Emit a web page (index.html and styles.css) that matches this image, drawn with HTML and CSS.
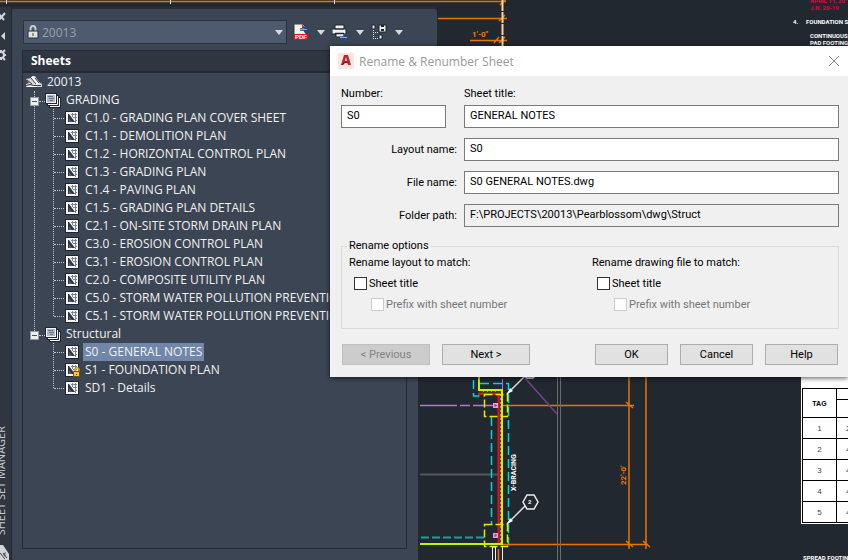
FILE: index.html
```html
<!DOCTYPE html>
<html lang="en">
<head>
<meta charset="utf-8">
<title>Sheet Set Manager</title>
<link rel="stylesheet" href="styles.css">
</head>
<body>
<svg width="0" height="0" class="defs" aria-hidden="true">
  <defs>
    <symbol id="sheet" viewBox="0 0 14 14">
      <path fill="#1f252c" d="M0 0h14v14H0z"/><path fill="#f5f5f5" d="M1 1h12v12H1z"/>
      <path fill="#303845" d="M3 3l1 0 6 8H3z"/>
      <path d="M6 3.500h6M7.500 2v4M10.500 2v10M8 6.500h4M10 9.500h2" stroke="#7b838f" fill="none"/>
      <path d="M4 7v4h3z" fill="#59616d"/>
    </symbol>
    <symbol id="subset" viewBox="0 0 16 15">
      <path fill="#1f252c" d="M0 0h12v2h2v2h2v11H4v-2H2v-2H0z"/>
      <path d="M5 13.500h9.500V5M3 11.500h9.500V3" stroke="#fff" fill="none"/>
      <path fill="#f2f4f7" d="M1 1h10v9H1z"/><path fill="#aeb7c5" d="M2 2h8v7H2z"/>
      <path d="M3 3.500h5M4 5.500h5M5 7.500h3" stroke="#667287"/>
    </symbol>
    <symbol id="sheetset" viewBox="0 0 16 12">
      <path fill="#d5d7da" d="M0 3l5-1 1-2h3l4 6 3 2v3H0V8l3-1z"/>
      <path fill="#fff" d="M5 1h3l5 7-3 1zM1 10h10v1H1z"/>
      <path d="M1 4l5 4M5 2l5 6M9 2l4 5M0 9.500l4-1 4 1h7" stroke="#39414d" fill="none"/>
    </symbol>
  </defs>
</svg>

<main class="desktop">
  <svg class="drawing" width="848" height="560" viewBox="0 0 848 560" aria-hidden="true">
    <g class="dim">
      <path d="M0 1.500h506M438 18.500h69M470 40.500h37M500 5l6-6M499 21l6-6M499 43l6-6M494 43l5-6"/>
      <path d="M502 405.500h132M502 544.500h146M629 377v172M646 377v172M626 402l7 6M626 541l7 6M643 541l7 6"/>
      <path d="M498.500 549v11"/>
    </g>
    <path d="M502.500 0v46" stroke="#ffd0a8" stroke-width="2" stroke-dasharray="11 1"/>
    <path d="M6.500 0v4M170.500 0v4M334.500 0v4" stroke="#ddd"/>
    <path d="M557.500 377v183M560.500 377v183" stroke="#6a6c70"/>
    <path d="M420 474.500h79" stroke="#56565a" stroke-width="2"/>
    <path d="M524 377l33 37" stroke="#70438c" stroke-width="1.500"/>
    <path d="M420 405.500h78" stroke="#a877e8" stroke-width="1.500" stroke-dasharray="37 3 10 3"/>
    <path d="M502.500 379v13" stroke="#a877e8"/>
    <path d="M473.500 380v16h11M480 383.500h28.500V544M491.500 417v107" stroke="#00d5d8" fill="none" stroke-width="1.500" stroke-dasharray="9 4"/>
    <path d="M421 537.500h64" stroke="#10a4a7" stroke-width="2" stroke-dasharray="8 3"/>
    <path d="M479 391h22v4h-22zM498 394h4v150h-4z" fill="#49313b"/>
    <path d="M480 395l4-4m0 4l4-4m0 4l4-4m0 4l4-4M500.500 394v150" stroke="#a98b88" stroke-dasharray="2 2"/>
    <path d="M478 394h20.500V544" stroke="#e0101e" fill="none" stroke-width="2"/>
    <path d="M479 377v13h23v154H420" stroke="#c9f000" fill="none" stroke-width="2"/>
    <path d="M484.500 394.500h23v22h-23zM484.500 524.500h23v22h-23z" stroke="#e8e800" fill="none" stroke-width="1.500" stroke-dasharray="8 3"/>
    <path d="M493 403h5v5h-5zM493 533h5v5h-5z" fill="#f29adf"/>
    <path d="M495 404v3m0-1.500h2M495 534v3m0-2h2" stroke="#863b7a"/>
    <path d="M492.500 560v-13h3v13M502.500 546v14" stroke="#eee" fill="none"/>
    <path d="M507 394l18-18M507 524l18-18" stroke="#ddd" stroke-width="1.500"/>
    <path d="M507 394l3-6 3 3zM507 524l3-6 3 3z" fill="#fff"/>
    <path d="M523 502l4-7h7l4 7-4 7h-7zM524 376l3 2h6l2-2" stroke="#eee" fill="none" stroke-width="1.500"/>
    <text x="528" y="504" class="cad">2</text>
    <text x="472" y="37" class="cad cad-dim">1'-0"</text>
    <text transform="translate(626 485) rotate(-90)" class="cad cad-dim">22'-0'</text>
    <text transform="translate(516 491) rotate(-90)" class="cad cad-note">X-BRACING</text>
    <text x="810" y="3" class="cad cad-red">APRIL 11, 20</text>
    <text x="810" y="10" class="cad cad-red">J.N. 20-19</text>
    <text x="793" y="24" class="cad">4.</text>
    <text x="806" y="24" class="cad">FOUNDATION SO</text>
    <text x="810" y="38" class="cad">CONTINUOUS F</text>
    <text x="810" y="45" class="cad">PAD FOOTINGS</text>
    <text x="803" y="560" class="cad">SPREAD FOOTIN</text>
  </svg>

  <div class="schedule">
    <table>
      <tbody>
        <tr><th rowspan="2">TAG</th><td class="half"></td></tr>
        <tr><td class="half low"></td></tr>
        <tr><td>1</td><td>2</td></tr>
        <tr><td>2</td><td>4</td></tr>
        <tr><td>3</td><td>4</td></tr>
        <tr><td>4</td><td>4</td></tr>
        <tr><td>5</td><td>4</td></tr>
      </tbody>
    </table>
  </div>

  <aside class="palette">
    <div class="rail">
      <svg width="8" height="55" viewBox="0 0 8 55" aria-hidden="true">
        <path d="M-2 6l6 7M5 6l-6 7" stroke="#d4d6d9" stroke-width="2"/>
        <path d="M5 25v8l-4-4z" fill="#d4d6d9"/>
        <circle cx="1" cy="48" r="3" fill="none" stroke="#d4d6d9" stroke-width="2"/>
        <path d="M1 43v2M1 51v2M4 48h2M3 45l2-2M3 51l2 2" stroke="#d4d6d9" stroke-width="2"/>
      </svg>
      <div class="rail-foot">
        <span class="rail-title">SHEET SET MANAGER</span>
        <svg width="10" height="15" viewBox="0 0 10 15" aria-hidden="true">
          <path d="M0 0h3l6 9v6H0z" fill="#d2d4d6"/><path d="M0 8l5 6M3 8l4 5M6 8c-3 0-3 3 0 3" stroke="#3b424d" fill="none"/>
        </svg>
      </div>
    </div>
    <div class="palette-body">
      <div class="toolbar">
        <button class="combo" type="button">
          <svg width="12" height="14" viewBox="0 0 12 14"><path d="M3.500 7V4c0-4 5-4 5 0v3" stroke="#c7cbd1" stroke-width="2" fill="none"/><path d="M1 6h10v7H1z" fill="#e1e3e5" stroke="#282e37"/><path d="M6 8v3" stroke="#3c4452"/></svg>
          <span>20013</span><i class="caret"></i>
        </button>
        <button class="tool" type="button" aria-label="Publish to PDF">
          <svg width="17" height="17" viewBox="0 0 17 17"><path d="M1 0h9l3 3v8H1z" fill="#f3f3f3" stroke="#323946"/><path d="M9 0l4 4h-4z" fill="#d52222"/><path d="M7 5.500h7M11.500 2.500l3 3-3 3" stroke="#214a86" stroke-width="2.500" fill="none"/><path d="M7 5.500h7" stroke="#6fa5e4"/><path d="M1 10h14v6H1z" fill="#d21818"/><text x="2" y="15" class="pdf">PDF</text></svg>
          <i class="caret"></i>
        </button>
        <button class="tool" type="button" aria-label="Publish">
          <svg width="17" height="17" viewBox="0 0 17 17"><path d="M3 5V1h9v4h2v5h-2v3H4v-3H0V5z" fill="#f0f0f0" stroke="#1e242b"/><path d="M3 5h9M3 9.500h9" stroke="#1e242b" stroke-width="1.500"/><path d="M8 13.500h7M12 10.500l3 3-3 3" stroke="#254f8e" stroke-width="2" fill="none"/><path d="M8 13.500h7" stroke="#83b1ec"/></svg>
          <i class="caret"></i>
        </button>
        <button class="tool" type="button" aria-label="Sheet selections">
          <svg width="17" height="17" viewBox="0 0 17 17"><path d="M2.500 6v10M4 8.500h3M4 14.500h3" stroke="#dadde1" stroke-dasharray="1 1"/><path d="M1 1h3v4H1zM8 11h3v4H8z" fill="#eee" stroke="#1e242b"/><path d="M8 1h7v7H8z" fill="#eee" stroke="#1e242b"/><path d="M10 1h3v2h-3zM10 5h3v2h-3z" fill="#1e242b"/></svg>
          <i class="caret"></i>
        </button>
      </div>
      <section class="panel">
        <h2>Sheets</h2>
        <ul class="tree">
          <li><div class="row root"><svg class="ic-set"><use href="#sheetset"/></svg><span>20013</span></div>
            <ul class="groups">
              <li>
                <div class="row"><button class="toggle" type="button" aria-label="Collapse"></button><svg class="ic-sub"><use href="#subset"/></svg><span>GRADING</span></div>
                <ul class="sheets">
                  <li class="row"><svg class="ic"><use href="#sheet"/></svg><span>C1.0 - GRADING PLAN COVER SHEET</span></li>
                  <li class="row"><svg class="ic"><use href="#sheet"/></svg><span>C1.1 - DEMOLITION PLAN</span></li>
                  <li class="row"><svg class="ic"><use href="#sheet"/></svg><span>C1.2 - HORIZONTAL CONTROL PLAN</span></li>
                  <li class="row"><svg class="ic"><use href="#sheet"/></svg><span>C1.3 - GRADING PLAN</span></li>
                  <li class="row"><svg class="ic"><use href="#sheet"/></svg><span>C1.4 - PAVING PLAN</span></li>
                  <li class="row"><svg class="ic"><use href="#sheet"/></svg><span>C1.5 - GRADING PLAN DETAILS</span></li>
                  <li class="row"><svg class="ic"><use href="#sheet"/></svg><span>C2.1 - ON-SITE STORM DRAIN PLAN</span></li>
                  <li class="row"><svg class="ic"><use href="#sheet"/></svg><span>C3.0 - EROSION CONTROL PLAN</span></li>
                  <li class="row"><svg class="ic"><use href="#sheet"/></svg><span>C3.1 - EROSION CONTROL PLAN</span></li>
                  <li class="row"><svg class="ic"><use href="#sheet"/></svg><span>C2.0 - COMPOSITE UTILITY PLAN</span></li>
                  <li class="row"><svg class="ic"><use href="#sheet"/></svg><span>C5.0 - STORM WATER POLLUTION PREVENTION</span></li>
                  <li class="row"><svg class="ic"><use href="#sheet"/></svg><span>C5.1 - STORM WATER POLLUTION PREVENTION</span></li>
                </ul>
              </li>
              <li>
                <div class="row"><button class="toggle" type="button" aria-label="Collapse"></button><svg class="ic-sub"><use href="#subset"/></svg><span>Structural</span></div>
                <ul class="sheets">
                  <li class="row"><svg class="ic"><use href="#sheet"/></svg><span class="selected">S0 - GENERAL NOTES</span></li>
                  <li class="row"><svg class="ic"><use href="#sheet"/><path d="M10 10V7c0-3 4-3 4 0v3" stroke="#d99b22" fill="none" stroke-width="1.500"/><path d="M8.500 8.500h6v5h-6z" fill="#ffc928" stroke="#7b4b00"/><path d="M11 11h1v1h-1z" fill="#402400"/></svg><span>S1 - FOUNDATION PLAN</span></li>
                  <li class="row"><svg class="ic"><use href="#sheet"/></svg><span>SD1 - Details</span></li>
                </ul>
              </li>
            </ul>
          </li>
        </ul>
      </section>
    </div>
  </aside>

  <form class="dialog" role="dialog" aria-labelledby="dlg-title">
    <header>
      <svg width="16" height="16" viewBox="0 0 16 16" aria-hidden="true"><path d="M0 0h16v16H0z" fill="#fae5df"/><path d="M6 2h4l3 10h-3l-1-3H6l-1 3H3z" fill="#c4242c"/><path d="M3 12l3-3h4l1 1H7l-2 2z" fill="#7f1118"/><path d="M8 4l1 4H7z" fill="#fae5df"/></svg>
      <h1 id="dlg-title">Rename &amp; Renumber Sheet</h1>
      <button class="close" type="button" aria-label="Close"><svg width="12" height="12" viewBox="0 0 12 12"><path d="M1 1l10 10M11 1L1 11" stroke="#8c8c8c"/></svg></button>
    </header>
    <div class="content">
      <div class="fields">
        <label for="num">Number:</label><label for="title">Sheet title:</label>
        <input id="num" type="text" value="S0"><input id="title" type="text" value="GENERAL NOTES">
        <label class="side" for="layout">Layout name:</label><input id="layout" type="text" value="S0">
        <label class="side" for="file">File name:</label><input id="file" type="text" value="S0 GENERAL NOTES.dwg">
        <label class="side" for="folder">Folder path:</label><input id="folder" type="text" readonly value="F:\PROJECTS\20013\Pearblossom\dwg\Struct">
      </div>
      <fieldset>
        <legend>Rename options</legend>
        <div class="options">
          <div class="option">
            <p>Rename layout to match:</p>
            <label><input type="checkbox">Sheet title</label>
            <label class="sub"><input type="checkbox" disabled>Prefix with sheet number</label>
          </div>
          <div class="option">
            <p>Rename drawing file to match:</p>
            <label><input type="checkbox">Sheet title</label>
            <label class="sub"><input type="checkbox" disabled>Prefix with sheet number</label>
          </div>
        </div>
      </fieldset>
      <footer>
        <button class="wide" type="button" disabled>&lt; Previous</button>
        <button class="wide" type="button">Next &gt;</button>
        <button class="ok" type="button">OK</button>
        <button type="button">Cancel</button>
        <button type="button">Help</button>
      </footer>
    </div>
  </form>
</main>
</body>
</html>
```
FILE: styles.css
```css
* { box-sizing: border-box; }
body { margin: 0; background: #222830; overflow: hidden; }
ul { list-style: none; margin: 0; padding: 0; }
button, input { font: inherit; margin: 0; }
.defs { position: absolute; }
.desktop { position: relative; height: 100vh; overflow: hidden; font-family: "Open Sans", "Noto Sans", sans-serif; }
.drawing { position: absolute; top: 0; left: 0; }
.dim { stroke: #e87400; stroke-width: 1.500; fill: none; }
.cad { font: bold 6px Roboto, "Liberation Sans", sans-serif; fill: #fff; }
.cad-dim { fill: #f57c00; font-size: 8px; }
.cad-note { font-size: 7px; }
.cad-red { fill: #e6003e; }

.schedule { position: absolute; left: 801px; top: 377px; width: 60px; padding: 11px 0 1px 1px; background: #fff; }
.schedule table { border-collapse: collapse; table-layout: fixed; width: 68px; font: 8px "Liberation Sans", sans-serif; text-align: center; color: #35465c; }
.schedule th, .schedule td { border: 1px solid #000; padding: 0; height: 21px; width: 34px; }
.schedule th { color: #000; font-size: 7px; }
.schedule td + td { text-align: left; padding-left: 9px; }
.schedule .half { height: 11px; }
.schedule .low { height: 18px; }

.palette { position: absolute; left: 0; top: 7px; bottom: 0; width: 437px; display: flex; }
.rail { width: 12px; flex: none; background: #2f3541; border-right: 1px solid #20262e; display: flex; flex-direction: column; justify-content: space-between; overflow: hidden; }
.rail-foot { display: flex; flex-direction: column; gap: 10px; }
.rail-title { writing-mode: vertical-rl; transform: rotate(180deg); font-size: 11px; line-height: 14px; color: #c8cacd; width: 14px; margin-left: -6px; white-space: nowrap; }
.palette-body { flex: 1; display: flex; flex-direction: column; border-top: 2px solid #282e38; background: linear-gradient(#3c4553, #3c4553) 0 0 / 406px 100% no-repeat; }
.toolbar { display: flex; align-items: center; height: 41px; padding: 5px 10px 0 11px; gap: 6px; background: #3c4553; border-top-right-radius: 3px; }
.combo { display: flex; align-items: center; gap: 3px; width: 264px; height: 24px; padding: 0 3px; background: #4e5b6f; border: 1px solid #2b323d; color: #9aa2ae; font-size: 12px; }
.combo .caret { margin-left: auto; }
.caret { width: 0; height: 0; border: 4px solid transparent; border-top: 5px solid #d7dade; border-bottom: 0; }
.tool { display: flex; align-items: center; gap: 7px; width: 33px; padding: 0; background: none; border: 0; }
.pdf { font: bold 6px "Liberation Sans", sans-serif; fill: #fff; }
.panel { flex: 1; width: 385px; margin: 0 0 11px 10px; border: 1px solid #252b34; overflow: hidden; }
.panel h2 { margin: 0; height: 22px; padding-left: 8px; background: #2f3541; border-bottom: 2px solid #252b34; font-size: 12px; line-height: 20px; color: #fff; }
.tree { font-size: 12px; line-height: 16px; color: #f0f1f2; white-space: nowrap; }
.row { display: flex; align-items: center; height: 18px; }
.root { padding-left: 3px; }
.ic-set { width: 16px; height: 12px; margin-right: 5px; }
.ic-sub { width: 16px; height: 15px; margin-right: 5px; }
.ic { width: 14px; height: 14px; margin-right: 4px; flex: none; overflow: visible; }
.toggle { width: 9px; height: 9px; margin: 2px 6px 0 7px; padding: 0; border: 1px solid #999; background: linear-gradient(#31568d, #31568d) center / 5px 1px no-repeat, #eee; position: relative; }
.toggle::after { content: ""; position: absolute; left: 8px; top: 3px; width: 6px; border-top: 1px dotted #c4c8cd; }
.groups, .groups > li, .sheets { position: relative; }
.groups::before { content: ""; position: absolute; left: 11px; top: 0; height: 242px; border-left: 1px dotted #c4c8cd; }
.sheets { padding-left: 42px; }
.sheets::before { content: ""; position: absolute; left: 30px; top: 0; bottom: 9px; border-left: 1px dotted #c4c8cd; }
.sheets .row { position: relative; }
.sheets .row::before { content: ""; position: absolute; left: -11px; top: 9px; width: 10px; border-top: 1px dotted #c4c8cd; }
.sheets span { padding: 0 2px; line-height: 18px; }
.selected { background: #7087a9; }

.dialog { position: absolute; left: 330px; right: 0; top: 46px; background: #f0f0f0; box-shadow: 0 1px 5px #000a; font: 11px/14px Roboto, "Noto Sans", sans-serif; color: #000; }
.dialog header { display: flex; align-items: center; gap: 5px; height: 30px; padding: 0 8px; background: #fff; }
.dialog h1 { flex: 1; margin: 0; font: 12px "Open Sans", "Noto Sans", sans-serif; color: #999; }
.close { padding: 0; width: 12px; height: 12px; border: 0; background: none; display: flex; }
.content { padding: 11px 9px 12px 11px; }
.fields { display: grid; grid-template-columns: 105px 1fr; gap: 10px 18px; align-items: center; }
.fields > label:nth-child(-n+2) { margin-bottom: -6px; }
.fields .side { text-align: right; margin-right: -11px; }
.fields input { width: 100%; height: 23px; padding: 0 5px 2px; border: 1px solid #7a7a7a; background: #fff; color: #000; border-radius: 0; }
.fields input:read-only { background: #f0f0f0; }
fieldset { margin: 12px 0 0; padding: 0 7px 16px; border: 1px solid #dcdcdc; min-width: 0; }
legend { padding: 0 2px; margin-left: -2px; }
.options { display: grid; grid-template-columns: 243px 1fr; }
.option p { margin: 3px 0 6px; }
.option label { display: flex; align-items: center; gap: 2px; padding-left: 5px; height: 15px; margin-bottom: 6px; }
.option .sub { padding-left: 22px; margin-bottom: 0; color: #777; }
.option input { appearance: none; width: 13px; height: 13px; border: 1px solid #333; background: #fff; }
.option input:disabled { border-color: #ccc; }
footer { display: flex; gap: 12px; margin-top: 15px; padding: 0 1px; }
footer button { width: 73px; height: 21px; padding: 0; border: 1px solid #adadad; background: #e1e1e1; color: #000; line-height: 18px; }
footer .wide { width: 88px; }
footer button:disabled { background: #ccc; border-color: #bfbfbf; color: #838383; }
footer .ok { margin-left: auto; }
```
